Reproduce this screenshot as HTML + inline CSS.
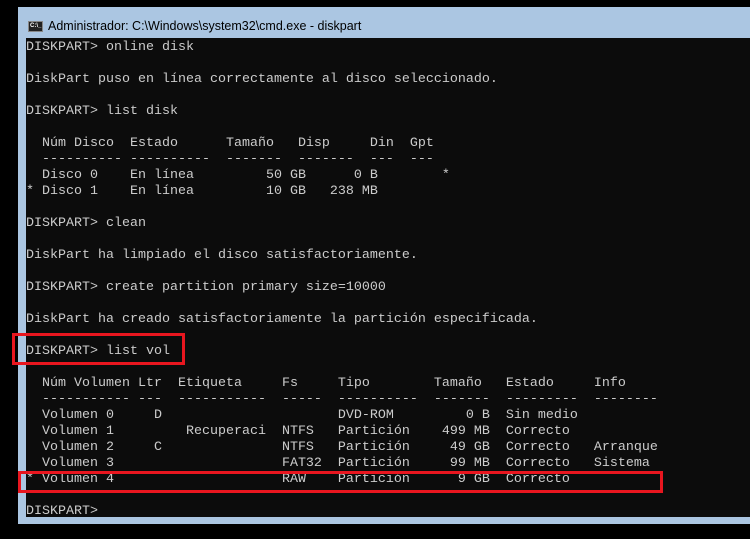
<!DOCTYPE html>
<html><head><meta charset="utf-8"><style>
body{margin:0;width:750px;height:539px;background:#000;position:relative;overflow:hidden}
#frame{position:absolute;left:18px;top:7px;width:740px;height:517px;background:#abc6e2}
#title{position:absolute;left:48px;top:19px;font:12.5px "Liberation Sans",sans-serif;color:#000}
#icon{position:absolute;left:28px;top:21px;width:15px;height:11px;background:#222;border:1px solid #888;box-sizing:border-box;font:bold 6px "Liberation Sans",sans-serif;color:#fff;line-height:9px;padding-left:1px}
#con{position:absolute;left:26px;top:38px;width:730px;height:479px;background:#0c0c0c}
pre{margin:0;position:absolute;left:26px;top:40px;font:13.33px/16px "Liberation Mono",monospace;color:#cccccc}
.box{position:absolute;border:3px solid #e8161f;box-sizing:border-box}
</style></head><body>
<div id="frame"></div>
<div id="icon">C:\_</div>
<div id="title">Administrador: C:\Windows\system32\cmd.exe - diskpart</div>
<div id="con"></div>
<pre>DISKPART&gt; online disk

DiskPart puso en línea correctamente al disco seleccionado.

DISKPART&gt; list disk

  Núm Disco  Estado      Tamaño   Disp     Din  Gpt
  ---------- ----------  -------  -------  ---  ---
  Disco 0    En línea         50 GB      0 B        *
* Disco 1    En línea         10 GB   238 MB

DISKPART&gt; clean

DiskPart ha limpiado el disco satisfactoriamente.

DISKPART&gt; create partition primary size=10000

DiskPart ha creado satisfactoriamente la partición especificada.

DISKPART&gt; list vol

  Núm Volumen Ltr  Etiqueta     Fs     Tipo        Tamaño   Estado     Info
  ----------- ---  -----------  -----  ----------  -------  ---------  --------
  Volumen 0     D                      DVD-ROM         0 B  Sin medio
  Volumen 1         Recuperaci  NTFS   Partición    499 MB  Correcto
  Volumen 2     C               NTFS   Partición     49 GB  Correcto   Arranque
  Volumen 3                     FAT32  Partición     99 MB  Correcto   Sistema
* Volumen 4                     RAW    Partición      9 GB  Correcto

DISKPART&gt;</pre>
<div class="box" style="left:12px;top:333px;width:173px;height:32px"></div>
<div class="box" style="left:18px;top:471px;width:645px;height:22px"></div>
</body></html>
